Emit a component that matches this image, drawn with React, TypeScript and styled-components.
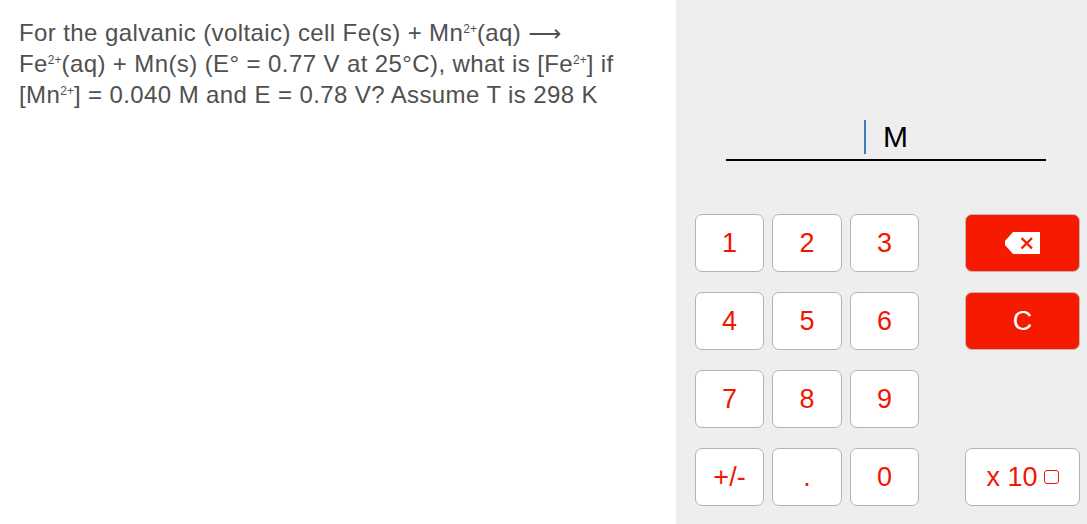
import React from "react";
import styled, { createGlobalStyle } from "styled-components";

const Global = createGlobalStyle`
  html, body { margin: 0; padding: 0; background: #ffffff; }
  body { font-family: "Liberation Sans", Arial, sans-serif; }
`;

const Page = styled.div`
  display: flex;
  width: 1087px;
  height: 524px;
  overflow: hidden;
`;

const QuestionPane = styled.div`
  flex: 1;
  padding: 17px 0 0 19px;
  color: #505050;
  font-size: 24px;
  letter-spacing: 0.4px;
`;

const QLine = styled.div`
  line-height: 31px;
  height: 31px;
  white-space: nowrap;
`;

const Sup = styled.span`
  font-size: 12px;
  vertical-align: 8px;
  line-height: 0;
  letter-spacing: 0;
`;

const Arrow = styled.span`
  font-family: "DejaVu Sans", sans-serif;
  font-size: 23px;
  line-height: 0;
  letter-spacing: 0;
`;

const AnswerPanel = styled.div`
  width: 411px;
  flex: none;
  background: #eeeeee;
  padding-top: 120px;
  box-sizing: border-box;
`;

const AnswerField = styled.div`
  margin: 0 41px 0 50px;
  padding-bottom: 5px;
  border-bottom: 2px solid #000000;
  display: flex;
  justify-content: center;
  align-items: center;
  height: 34px;
`;

const Caret = styled.span`
  width: 2px;
  height: 34px;
  background: #3b7dbd;
  margin-right: 17px;
`;

const Unit = styled.span`
  font-size: 30px;
  color: #000000;
  line-height: 1;
`;

const Keypad = styled.div`
  margin-top: 53px;
  padding-left: 19px;
  display: grid;
  grid-template-columns: 69px 70px 69px 30px 115px;
  grid-auto-rows: 58px;
  column-gap: 8px;
  row-gap: 20px;
`;

const Key = styled.button<{ $red?: boolean; $side?: boolean }>`
  box-sizing: border-box;
  margin: 0;
  padding: 0;
  grid-column: ${(p) => (p.$side ? "5" : "auto")};
  display: flex;
  align-items: center;
  justify-content: center;
  border-radius: 7px;
  border: 1px solid ${(p) => (p.$red ? "#c4b4b2" : "#b3b3b3")};
  background: ${(p) => (p.$red ? "#f61a00" : "#ffffff")};
  color: ${(p) => (p.$red ? "#ffffff" : "#f21600")};
  font-family: "Liberation Sans", Arial, sans-serif;
  font-size: 27px;
  cursor: pointer;
`;

const Spacer = styled.div`
  grid-column: 4 / 6;
`;

const PowerBox = styled.span`
  display: inline-block;
  box-sizing: border-box;
  width: 15px;
  height: 14px;
  border: 1.5px solid #f21600;
  border-radius: 3px;
  margin-left: 6px;
  vertical-align: 5px;
`;

const Backspace = () => (
  <svg width="35" height="22" viewBox="0 0 35 22">
    <polygon points="0,9 8,0 35,0 35,22 8,22 0,13" fill="#ffffff" />
    <path
      d="M16.5 6 L27 16.5 M27 6 L16.5 16.5"
      stroke="#f61a00"
      strokeWidth="2.4"
      fill="none"
    />
  </svg>
);

export default function App() {
  const digits = [
    ["1", "2", "3"],
    ["4", "5", "6"],
    ["7", "8", "9"],
    ["+/-", ".", "0"],
  ];
  return (
    <>
      <Global />
      <Page>
        <QuestionPane>
          <QLine>
            For the galvanic (voltaic) cell Fe(s) + Mn<Sup>2+</Sup>(aq) <Arrow>⟶</Arrow>
          </QLine>
          <QLine>
            Fe<Sup>2+</Sup>(aq) + Mn(s) (E° = 0.77 V at 25°C), what is [Fe<Sup>2+</Sup>] if
          </QLine>
          <QLine>
            [Mn<Sup>2+</Sup>] = 0.040 M and E = 0.78 V? Assume T is 298 K
          </QLine>
        </QuestionPane>
        <AnswerPanel>
          <AnswerField>
            <Caret />
            <Unit>M</Unit>
          </AnswerField>
          <Keypad>
            {digits[0].map((d) => (
              <Key key={d}>{d}</Key>
            ))}
            <Key $red $side aria-label="backspace">
              <Backspace />
            </Key>
            {digits[1].map((d) => (
              <Key key={d}>{d}</Key>
            ))}
            <Key $red $side>C</Key>
            {digits[2].map((d) => (
              <Key key={d}>{d}</Key>
            ))}
            <Spacer />
            {digits[3].map((d) => (
              <Key key={d}>{d}</Key>
            ))}
            <Key $side>
              x 10<PowerBox />
            </Key>
          </Keypad>
        </AnswerPanel>
      </Page>
    </>
  );
}
